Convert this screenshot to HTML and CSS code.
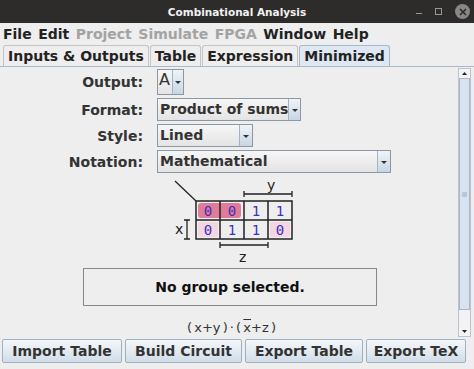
FILE: index.html
```html
<!DOCTYPE html>
<html lang="en">
<head>
    <meta charset="UTF-8">
    <title>Combinational Analysis</title>
    <link rel="stylesheet" href="styles.css">
</head>
<body>
    <div class="window">
        <div class="titlebar">
            <span class="title">Combinational Analysis</span>
            <div class="controls">
                <span class="ctl-min"></span>
                <span class="ctl-max"></span>
                <span class="ctl-close">
                    <svg width="8" height="8" viewBox="0 0 8 8"><path d="M1 1L7 7M7 1L1 7" stroke="#2d2a2a" stroke-width="1.6"/></svg>
                </span>
            </div>
        </div>

        <div class="menubar">
            <span>File</span>
            <span>Edit</span>
            <span class="disabled">Project</span>
            <span class="disabled">Simulate</span>
            <span class="disabled">FPGA</span>
            <span>Window</span>
            <span>Help</span>
        </div>

        <div class="tabs">
            <span class="tab">Inputs &amp; Outputs</span>
            <span class="tab">Table</span>
            <span class="tab">Expression</span>
            <span class="tab active">Minimized</span>
        </div>

        <div class="panel">
            <div class="content">
                <div class="form">
                    <label>Output:</label>
                    <div class="combo combo-a"><span class="val plain">A</span><span class="arrow"></span></div>
                    <label>Format:</label>
                    <div class="combo combo-format"><span class="val">Product of sums</span><span class="arrow"></span></div>
                    <label>Style:</label>
                    <div class="combo combo-style"><span class="val">Lined</span><span class="arrow"></span></div>
                    <label>Notation:</label>
                    <div class="combo combo-notation"><span class="val">Mathematical</span><span class="arrow"></span></div>
                </div>

                <div class="kmap">
                    <svg width="140" height="90" viewBox="0 0 140 90">
                        <!-- corner diagonal -->
                        <line x1="5" y1="4" x2="26" y2="24" stroke="#222" stroke-width="1.3"/>
                        <!-- y label + bracket -->
                        <text x="97" y="13" class="klabel">y</text>
                        <path d="M74 14V20M74 17H122M122 14V20" stroke="#222" stroke-width="1.3" fill="none"/>
                        <!-- highlights -->
                        <rect x="28" y="26" width="43" height="15" rx="3" fill="#e07c98"/>
                        <rect x="28" y="45" width="20" height="15" rx="2" fill="#f3d6e0"/>
                        <rect x="100" y="45" width="20" height="15" rx="2" fill="#f3d6e0"/>
                        <!-- grid -->
                        <rect x="26" y="24" width="96" height="38" fill="none" stroke="#222" stroke-width="1.5"/>
                        <path d="M26 43H122M50 24V62M74 24V62M98 24V62" stroke="#222" stroke-width="1.5"/>
                        <!-- x label + bracket -->
                        <text x="5" y="57" class="klabel">x</text>
                        <path d="M17 43V62M14 43H20M14 62H20" stroke="#222" stroke-width="1.3" fill="none"/>
                        <!-- z label + bracket -->
                        <path d="M50 65V71M50 68H98M98 65V71" stroke="#222" stroke-width="1.3" fill="none"/>
                        <text x="69" y="85" class="klabel">z</text>
                        <!-- values -->
                        <text x="38" y="39" class="kval">0</text>
                        <text x="62" y="39" class="kval">0</text>
                        <text x="86" y="39" class="kval">1</text>
                        <text x="110" y="39" class="kval">1</text>
                        <text x="38" y="58" class="kval">0</text>
                        <text x="62" y="58" class="kval">1</text>
                        <text x="86" y="58" class="kval">1</text>
                        <text x="110" y="58" class="kval">0</text>
                    </svg>
                </div>

                <div class="message">No group selected.</div>

                <div class="expr">( x+y ) · ( <span class="over">x</span>+z )</div>
            </div>
            <div class="scrollbar">
                <span class="sb-btn">
                    <svg width="5" height="3" viewBox="0 0 5 3"><path d="M0 3L2.5 0L5 3Z" fill="#222"/></svg>
                </span>
                <span class="sb-thumb"><span class="grip"></span></span>
                <span class="sb-track"></span>
                <span class="sb-btn">
                    <svg width="5" height="3" viewBox="0 0 5 3"><path d="M0 0L2.5 3L5 0Z" fill="#222"/></svg>
                </span>
            </div>
        </div>

        <div class="buttons">
            <button class="btn btn-import">Import Table</button>
            <button class="btn btn-build">Build Circuit</button>
            <button class="btn btn-export">Export Table</button>
            <button class="btn btn-tex">Export TeX</button>
        </div>
    </div>
</body>
</html>
```

FILE: styles.css
```css
body {
    margin: 0;
    background-color: #eeeeee;
    font-family: "DejaVu Sans", Verdana, sans-serif;
}
.window {
    width: 474px;
    height: 369px;
    display: flex;
    flex-direction: column;
    overflow: hidden;
    background-color: #eeeeee;
}
.titlebar {
    height: 23px;
    background-color: #2e2b2b;
    display: flex;
    align-items: center;
    justify-content: center;
    position: relative;
    flex-shrink: 0;
}
.title {
    color: #f2f2f2;
    font-size: 10.5px;
    font-weight: bold;
}
.controls {
    position: absolute;
    right: 4px;
    top: 4px;
    display: flex;
    align-items: center;
    gap: 13px;
}
.ctl-min {
    width: 6px;
    height: 1px;
    background-color: #9a9696;
    margin-top: 3px;
}
.ctl-max {
    width: 5px;
    height: 5px;
    border: 1px solid #9a9696;
}
.ctl-close {
    width: 15px;
    height: 15px;
    border-radius: 50%;
    background-color: #8a8686;
    display: flex;
    align-items: center;
    justify-content: center;
}
.menubar {
    height: 21px;
    display: flex;
    align-items: center;
    gap: 6.5px;
    padding-left: 3px;
    font-size: 14px;
    font-weight: bold;
    color: #222;
    flex-shrink: 0;
}
.menubar .disabled {
    color: #a3a3a3;
}
.tabs {
    height: 22px;
    display: flex;
    align-items: flex-end;
    padding-left: 3px;
    gap: 1px;
    border-bottom: 1px solid #a8b8c8;
    flex-shrink: 0;
}
.tab {
    height: 20px;
    padding: 0 4px;
    font-size: 14px;
    font-weight: bold;
    color: #222;
    line-height: 20px;
    border: 1px solid #c4c4c4;
    border-bottom: none;
    border-radius: 3px 3px 0 0;
    background-color: #eeeeee;
}
.tab.active {
    background-color: #dde8f3;
    border-color: #a8b8c8;
}
.panel {
    flex: 1;
    display: flex;
    padding: 1px 1px 2px 1px;
    min-height: 0;
}
.content {
    flex: 1;
    display: flex;
    flex-direction: column;
    align-items: center;
}
.form {
    display: grid;
    grid-template-columns: 72px auto;
    column-gap: 14px;
    row-gap: 3px;
    width: 322px;
    margin-left: 5px;
    padding-top: 1px;
    align-items: center;
}
.form label {
    justify-self: end;
    font-size: 14px;
    font-weight: bold;
    color: #333;
}
.combo {
    height: 23px;
    display: flex;
    align-items: stretch;
    border: 1px solid #8b97a3;
    background: linear-gradient(#f6f6f6, #e4e4e4);
    box-sizing: border-box;
}
.combo .val {
    flex: 1;
    padding-left: 2px;
    font-size: 14px;
    font-weight: bold;
    color: #333;
    line-height: 20px;
    white-space: nowrap;
}
.combo .val.plain {
    font-weight: normal;
    font-size: 16px;
}
.combo .arrow {
    width: 12px;
    border-left: 1px solid #a6b4c2;
    background: linear-gradient(#f0f4f8, #c8d6e4);
    position: relative;
}
.combo .arrow::after {
    content: "";
    position: absolute;
    left: 3px;
    top: 50%;
    margin-top: -1px;
    border-left: 3px solid transparent;
    border-right: 3px solid transparent;
    border-top: 3px solid #333;
}
.combo-a {
    width: 27px;
    height: 26px;
}
.combo-a .val {
    line-height: 20px;
    padding-left: 1px;
}
.combo-a .arrow {
    width: 10px;
}
.combo-a .arrow::after {
    left: 2px;
}
.combo-format {
    width: 144px;
}
.combo-style {
    width: 96px;
}
.combo-notation {
    width: 234px;
}
.kmap {
    margin-top: 4px;
    margin-left: 20px;
    height: 90px;
}
.klabel {
    font-family: "DejaVu Sans", sans-serif;
    font-size: 14px;
    fill: #222;
}
.kval {
    font-family: "DejaVu Sans Mono", monospace;
    font-size: 14px;
    fill: #3b2fc4;
    text-anchor: middle;
}
.message {
    width: 292px;
    height: 36px;
    margin-top: 1px;
    margin-left: 1px;
    border: 1px solid #888;
    display: flex;
    align-items: center;
    justify-content: center;
    font-size: 14px;
    font-weight: bold;
    color: #111;
}
.expr {
    margin-top: 14px;
    margin-left: 4px;
    font-size: 13px;
    color: #333;
    word-spacing: -2px;
}
.expr .over {
    text-decoration: overline;
}
.scrollbar {
    width: 11px;
    margin-right: 2px;
    display: flex;
    flex-direction: column;
    border: 1px solid #b8c4d0;
    background-color: #f2f2f2;
}
.sb-btn {
    height: 9px;
    display: flex;
    align-items: center;
    justify-content: center;
    background-color: #f4f4f4;
}
.sb-thumb {
    height: 230px;
    background-color: #d7e3ef;
    border: 1px solid #a8b8c8;
    display: flex;
    align-items: center;
    justify-content: center;
}
.grip {
    width: 5px;
    height: 5px;
    background-color: #b8c8d8;
}
.sb-track {
    flex: 1;
}
.buttons {
    height: 27px;
    display: flex;
    gap: 3px;
    padding: 0 0 3px 2px;
    flex-shrink: 0;
}
.btn {
    height: 24px;
    padding: 0;
    border: 1px solid #9fb0c2;
    border-radius: 2px;
    background: linear-gradient(#f4f7fa, #d2dde8);
    font-family: "DejaVu Sans", sans-serif;
    font-size: 14px;
    font-weight: bold;
    color: #333;
}
.btn-import {
    width: 120px;
}
.btn-build {
    width: 117px;
}
.btn-export {
    width: 118px;
}
.btn-tex {
    width: 100px;
}
```
